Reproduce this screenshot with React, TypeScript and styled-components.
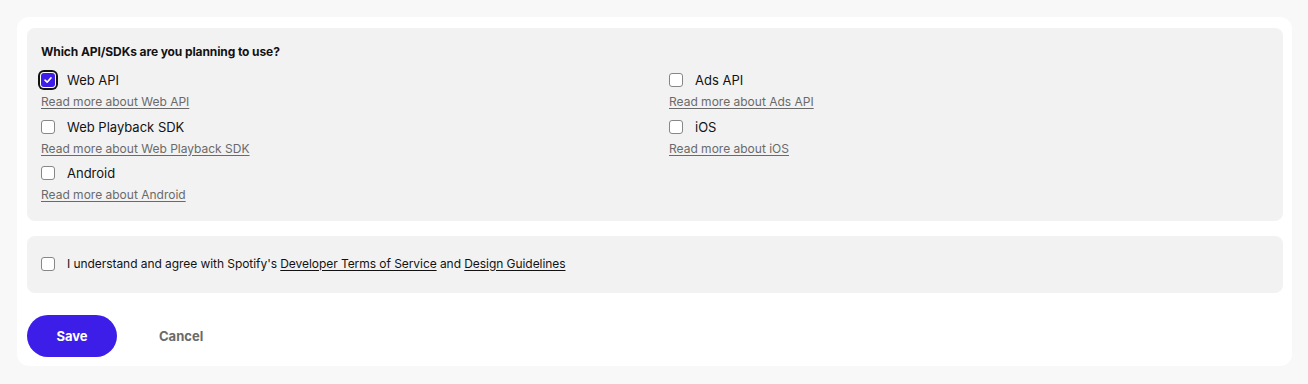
import React, { useState } from 'react';
import styled, { createGlobalStyle } from 'styled-components';

const GlobalStyle = createGlobalStyle`
  body {
    margin: 0;
    background: #f8f8f8;
    font-family: Inter, "Noto Sans", sans-serif;
    color: #121212;
  }
`;

const options = [
  { id: 'web-api', label: 'Web API', link: 'Read more about Web API' },
  { id: 'ads-api', label: 'Ads API', link: 'Read more about Ads API' },
  { id: 'web-playback', label: 'Web Playback SDK', link: 'Read more about Web Playback SDK' },
  { id: 'ios', label: 'iOS', link: 'Read more about iOS' },
  { id: 'android', label: 'Android', link: 'Read more about Android' },
];

const CheckIcon = () => (
  <svg width="10" height="10" viewBox="0 0 10 10" fill="none">
    <path d="M2 5.2 L4.1 7.2 L8 2.9" stroke="#fff" strokeWidth="1.6" strokeLinecap="round" strokeLinejoin="round" />
  </svg>
);

const Checkbox = ({ checked, onToggle }: { checked: boolean; onToggle: () => void }) => (
  <Box checked={checked} onClick={onToggle} role="checkbox" aria-checked={checked}>
    {checked && <CheckIcon />}
  </Box>
);

const App = () => {
  const [selected, setSelected] = useState<Record<string, boolean>>({ 'web-api': true });
  const [agreed, setAgreed] = useState(false);

  const toggle = (id: string) => setSelected((s) => ({ ...s, [id]: !s[id] }));

  return (
    <Page>
      <GlobalStyle />
      <Card>
        <Panel>
          <Heading>Which API/SDKs are you planning to use?</Heading>
          <OptionGrid>
            {options.map((o) => (
              <Option key={o.id}>
                <OptionRow>
                  <Checkbox checked={!!selected[o.id]} onToggle={() => toggle(o.id)} />
                  <OptionLabel>{o.label}</OptionLabel>
                </OptionRow>
                <ReadMore href="#">{o.link}</ReadMore>
              </Option>
            ))}
          </OptionGrid>
        </Panel>

        <TermsPanel>
          <OptionRow>
            <Checkbox checked={agreed} onToggle={() => setAgreed(!agreed)} />
            <TermsText>
              I understand and agree with Spotify's <TermsLink href="#">Developer Terms of Service</TermsLink> and{' '}
              <TermsLink href="#">Design Guidelines</TermsLink>
            </TermsText>
          </OptionRow>
        </TermsPanel>

        <Actions>
          <SaveButton>Save</SaveButton>
          <CancelButton>Cancel</CancelButton>
        </Actions>
      </Card>
    </Page>
  );
};

const Page = styled.div`
  padding: 17px 16px 18px 17px;
`;

const Card = styled.div`
  background: #fff;
  border-radius: 12px;
  padding: 11px 9px 9px 10px;
`;

const Panel = styled.div`
  background: #f2f2f2;
  border-radius: 8px;
  padding: 16px 14px 18px 14px;
`;

const Heading = styled.div`
  font-size: 12px;
  font-weight: 700;
  line-height: 16px;
  margin-bottom: 10px;
  letter-spacing: -0.1px;
`;

const OptionGrid = styled.div`
  display: grid;
  grid-template-columns: 1fr 1fr;
  column-gap: 28px;
  row-gap: 6.5px;
`;

const Option = styled.div`
  display: flex;
  flex-direction: column;
  align-items: flex-start;
`;

const OptionRow = styled.div`
  display: flex;
  align-items: center;
  gap: 12px;
  height: 20px;
`;

const Box = styled.span<{ checked: boolean }>`
  box-sizing: border-box;
  width: 14px;
  height: 14px;
  border-radius: 3px;
  display: flex;
  align-items: center;
  justify-content: center;
  cursor: pointer;
  flex-shrink: 0;
  background: ${(p) => (p.checked ? '#3d1de8' : '#fff')};
  border: ${(p) => (p.checked ? 'none' : '1px solid #878787')};
  box-shadow: ${(p) => (p.checked ? '0 0 0 1px #fff, 0 0 0 3px #121212' : 'none')};
`;

const OptionLabel = styled.span`
  font-size: 13px;
  line-height: 20px;
  color: #121212;
`;

const ReadMore = styled.a`
  margin-top: 3px;
  font-size: 12px;
  line-height: 17px;
  color: #6a6a6a;
  text-decoration: underline;
  text-underline-offset: 2px;
`;

const TermsPanel = styled.div`
  margin-top: 15px;
  background: #f2f2f2;
  border-radius: 8px;
  height: 57px;
  padding: 0 14px 2px;
  box-sizing: border-box;
  display: flex;
  align-items: center;
`;

const TermsText = styled.span`
  font-size: 12px;
  line-height: 16px;
  letter-spacing: -0.06px;
  color: #121212;
`;

const TermsLink = styled.a`
  color: #121212;
  text-decoration: underline;
  text-underline-offset: 2px;
`;

const Actions = styled.div`
  display: flex;
  align-items: center;
  margin-top: 22px;
  gap: 18px;
`;

const SaveButton = styled.button`
  width: 90px;
  height: 42px;
  border-radius: 21px;
  border: none;
  background: #3d1de8;
  color: #fff;
  font-family: Inter, sans-serif;
  font-size: 13px;
  font-weight: 700;
  cursor: pointer;
`;

const CancelButton = styled.button`
  height: 42px;
  padding: 0 24px;
  border: none;
  background: transparent;
  color: #6a6a6a;
  font-family: Inter, sans-serif;
  font-size: 13px;
  font-weight: 700;
  cursor: pointer;
`;

export default App;
